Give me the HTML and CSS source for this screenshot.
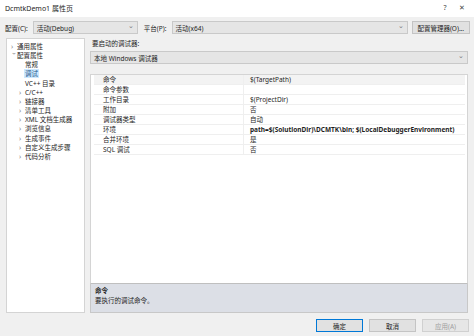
FILE: index.html
```html
<!DOCTYPE html>
<html>
<head>
  <meta charset="UTF-8">
  <title>DcmtkDemo1 属性页</title>
  <link rel="stylesheet" href="styles.css">
</head>
<body>
  <div class="window">
    <div class="titlebar">
      <span class="title">DcmtkDemo1 属性页</span>
      <span class="tb-btn">?</span>
      <span class="tb-btn close">✕</span>
    </div>

    <div class="dialog">
      <!-- 配置 / 平台 -->
      <div class="config-row">
        <label class="cfg-label">配置(C):</label>
        <div class="combo cfg-combo"><span>活动(Debug)</span><span class="arrow">⌄</span></div>
        <label class="cfg-label plat">平台(P):</label>
        <div class="combo plat-combo"><span>活动(x64)</span><span class="arrow">⌄</span></div>
        <button class="btn mgr">配置管理器(O)...</button>
      </div>

      <div class="main">
        <!-- 左侧树 -->
        <ul class="tree">
          <li class="lvl0"><span class="twisty">›</span>通用属性</li>
          <li class="lvl0"><span class="twisty open">›</span>配置属性</li>
          <li class="lvl1">常规</li>
          <li class="lvl1"><span class="sel">调试</span></li>
          <li class="lvl1">VC++ 目录</li>
          <li class="lvl1"><span class="twisty">›</span>C/C++</li>
          <li class="lvl1"><span class="twisty">›</span>链接器</li>
          <li class="lvl1"><span class="twisty">›</span>清单工具</li>
          <li class="lvl1"><span class="twisty">›</span>XML 文档生成器</li>
          <li class="lvl1"><span class="twisty">›</span>浏览信息</li>
          <li class="lvl1"><span class="twisty">›</span>生成事件</li>
          <li class="lvl1"><span class="twisty">›</span>自定义生成步骤</li>
          <li class="lvl1"><span class="twisty">›</span>代码分析</li>
        </ul>

        <!-- 右侧属性 -->
        <div class="pane">
          <div class="pane-label">要启动的调试器:</div>
          <div class="combo dbg-combo"><span>本地 Windows 调试器</span><span class="arrow">⌄</span></div>

          <div class="grid">
            <div class="row current"><span class="key">命令</span><span class="val">$(TargetPath)</span></div>
            <div class="row"><span class="key">命令参数</span><span class="val"></span></div>
            <div class="row"><span class="key">工作目录</span><span class="val">$(ProjectDir)</span></div>
            <div class="row"><span class="key">附加</span><span class="val">否</span></div>
            <div class="row"><span class="key">调试器类型</span><span class="val">自动</span></div>
            <div class="row"><span class="key">环境</span><span class="val bold">path=$(SolutionDir)\DCMTK\bin; $(LocalDebuggerEnvironment)</span></div>
            <div class="row"><span class="key">合并环境</span><span class="val">是</span></div>
            <div class="row"><span class="key">SQL 调试</span><span class="val">否</span></div>
          </div>

          <div class="desc">
            <div class="desc-title">命令</div>
            <div>要执行的调试命令。</div>
          </div>
        </div>
      </div>

      <div class="buttons">
        <button class="btn ok">确定</button>
        <button class="btn">取消</button>
        <button class="btn disabled">应用(A)</button>
      </div>
    </div>
  </div>
</body>
</html>
```

FILE: styles.css
```css
/* 窗口 */
body {
  margin: 0;
  background: #fff;
  font-family: "Noto Sans", "Noto Sans CJK SC", sans-serif;
  font-size: 6.5px;
  color: #1e1e1e;
}

.window {
  width: 474px;
  height: 336px;
  display: flex;
  flex-direction: column;
  overflow: hidden;
}

.titlebar {
  height: 15px;
  background: #fff;
  display: flex;
  align-items: center;
  padding: 0 6px 2px 5px;
  font-size: 7px;
}

.title {
  flex: 1;
}

.tb-btn {
  width: 22px;
  text-align: center;
  color: #444;
}

.tb-btn.close {
  width: 12px;
  font-size: 7px;
}

.dialog {
  flex: 1;
  background: #f0f0f0;
  padding: 4px 4px 0 5px;
  display: flex;
  flex-direction: column;
}

/* 配置行 */
.config-row {
  display: flex;
  align-items: center;
  height: 13px;
}

.cfg-label {
  width: 28px;
}

.cfg-label.plat {
  width: 28px;
  margin-left: 6px;
}

.combo {
  display: flex;
  align-items: center;
  justify-content: space-between;
  height: 11px;
  padding: 0 3px;
  background: #e5e5e5;
  border: 1px solid #c9c9c9;
}

.arrow {
  color: #777;
  font-size: 7px;
  line-height: 6px;
  margin-top: -3px;
}

.cfg-combo {
  width: 98px;
}

.plat-combo {
  width: 230px;
}

.btn {
  font: inherit;
  color: #1e1e1e;
  background: #e1e1e1;
  border: 1px solid #c4c4c4;
  height: 13px;
  padding: 0;
  margin: 0;
}

.btn.mgr {
  width: 59px;
  margin-left: 4px;
}

/* 主区域 */
.main {
  display: flex;
  margin-top: 4px;
  height: 275px;
  padding-right: 2px;
}

.tree {
  list-style: none;
  margin: 0 0 0 1px;
  padding: 3px 0 0;
  width: 77px;
  background: #fff;
  border: 1px solid #d4d4d4;
}

.tree li {
  height: 9.17px;
  line-height: 9px;
  white-space: nowrap;
}

.tree .lvl0 {
  padding-left: 10px;
}

.tree .lvl1 {
  padding-left: 18px;
}

.twisty {
  display: inline-block;
  width: 6px;
  color: #888;
  font-size: 7px;
  margin-left: -6px;
}

.twisty.open {
  transform: rotate(90deg);
}

.sel {
  background: #cce8ff;
  color: #2a5a8a;
  padding: 0 1px;
  margin-left: -1px;
}

.pane {
  flex: 1;
  margin-left: 5px;
  display: flex;
  flex-direction: column;
}

.pane-label {
  height: 10px;
  line-height: 9px;
  padding: 1px 0 0 2px;
}

.dbg-combo {
  margin-top: 2px;
  height: 11px;
}

.grid {
  margin-top: 10px;
  flex: 1;
  background: #fff;
  border: 1px solid #d4d4d4;
  border-bottom: 1px solid #bfbfbf;
  padding-right: 2px;
}

.row {
  display: flex;
  height: 10px;
  line-height: 9px;
  border-bottom: 1px solid #efefef;
  margin-left: 3px;
  box-sizing: border-box;
}

.row.current {
  background: #f3f3f3;
}

.key {
  width: 140px;
  padding-left: 9px;
  border-right: 1px solid #efefef;
}

.val {
  padding-left: 6px;
  white-space: nowrap;
}

.val.bold {
  font-weight: bold;
}

.desc {
  height: 29px;
  background: #dcdfe6;
  border: 1px solid #c8c8c8;
  border-top: none;
  padding: 2px 4px;
  box-sizing: border-box;
  line-height: 10px;
}

.desc-title {
  font-weight: bold;
}

/* 底部按钮 */
.buttons {
  display: flex;
  justify-content: flex-end;
  gap: 6px;
  margin-top: 6px;
  padding-right: 1px;
}

.buttons .btn {
  width: 47px;
}

.btn.ok {
  border: 1px solid #0078d7;
}

.btn.disabled {
  color: #a0a0a0;
  background: #e6e6e6;
  border-color: #d0d0d0;
}
```
